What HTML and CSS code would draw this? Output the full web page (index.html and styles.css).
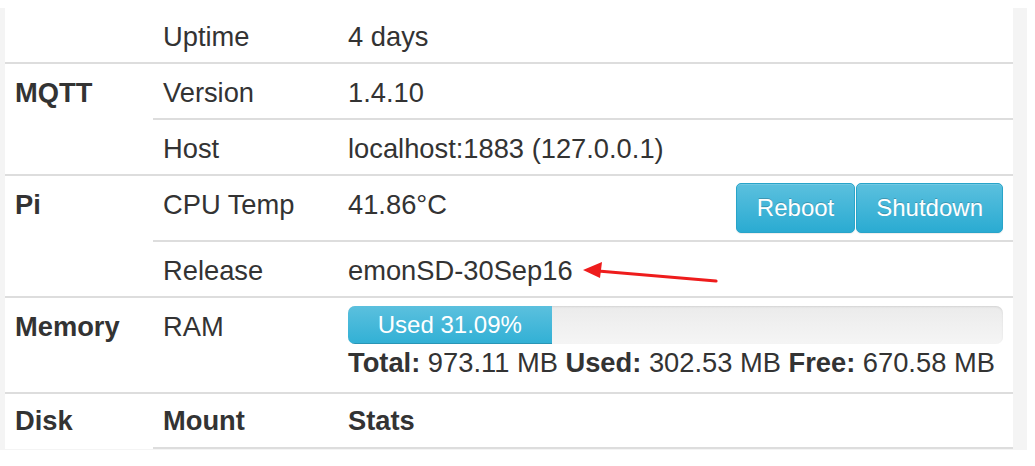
FILE: index.html
```html
<!DOCTYPE html>
<html>
<head>
<meta charset="utf-8">
<title>System status</title>
<link rel="stylesheet" href="styles.css">
</head>
<body>
<div class="page">
  <div class="frame">
    <table class="status">
      <colgroup>
        <col class="c1">
        <col class="c2">
        <col class="c3">
      </colgroup>
      <tr class="first">
        <th></th>
        <td>Uptime</td>
        <td>4 days</td>
      </tr>
      <tr>
        <th rowspan="2">MQTT</th>
        <td>Version</td>
        <td>1.4.10</td>
      </tr>
      <tr>
        <td>Host</td>
        <td>localhost:1883 (127.0.0.1)</td>
      </tr>
      <tr class="pi">
        <th rowspan="2">Pi</th>
        <td>CPU Temp</td>
        <td>
          <div class="temp-cell">
            <span>41.86°C</span>
            <div class="btn-group">
              <button class="btn btn-first">Reboot</button>
              <button class="btn btn-last">Shutdown</button>
            </div>
          </div>
        </td>
      </tr>
      <tr>
        <td>Release</td>
        <td>emonSD-30Sep16</td>
      </tr>
      <tr class="memory">
        <th>Memory</th>
        <td>RAM</td>
        <td>
          <div class="progress">
            <div class="progress-bar" style="width: 31.09%">Used 31.09%</div>
          </div>
          <div class="mem-stats"><b>Total:</b> 973.11 MB <b>Used:</b> 302.53 MB <b>Free:</b> 670.58 MB</div>
        </td>
      </tr>
      <tr class="head">
        <th>Disk</th>
        <th class="ul">Mount</th>
        <th class="ul">Stats</th>
      </tr>
    </table>
  </div>
  <svg class="arrow" width="1035" height="466" viewBox="0 0 1035 466">
    <line x1="716" y1="281" x2="598" y2="271" stroke="#ee1c1c" stroke-width="3.2" stroke-linecap="round"/>
    <polygon points="583,270 602,262 600,278" fill="#ee1c1c"/>
  </svg>
</div>
</body>
</html>
```

FILE: styles.css
```css
html, body {
  margin: 0;
  padding: 0;
  background: #ffffff;
}

body {
  font-family: "Liberation Sans", Arial, sans-serif;
  font-size: 27.3px;
  line-height: 37px;
  color: #333333;
}

.page {
  position: relative;
  width: 1035px;
  height: 466px;
  padding-top: 8px;
  box-sizing: border-box;
}

.frame {
  width: 1027px;
  box-sizing: border-box;
  background: #f4f4f4;
  padding: 0 14px 1px 5px;
}

.status {
  width: 1008px;
  background: #ffffff;
  border-collapse: collapse;
  table-layout: fixed;
}

.c1 { width: 148px; }
.c2 { width: 185px; }
.c3 { width: 675px; }

.status td,
.status th {
  text-align: left;
  vertical-align: top;
  padding: 10px 10px 7px 10px;
  border-top: 2px solid #dddddd;
  white-space: nowrap;
}

.status th {
  font-weight: bold;
}

.status tr.first td,
.status tr.first th {
  border-top: none;
  padding-top: 10px;
  padding-bottom: 7px;
}

.temp-cell {
  display: flex;
  justify-content: space-between;
  align-items: flex-start;
}

.btn-group {
  display: flex;
  margin: -3px 0 0 0;
}

.btn {
  font-family: "Liberation Sans", Arial, sans-serif;
  font-size: 24px;
  line-height: 48px;
  height: 50px;
  padding: 0 20px;
  color: #ffffff;
  text-shadow: 0 -1px 0 rgba(0, 0, 0, 0.2);
  background: linear-gradient(to bottom, #5bc0de 0%, #2aabd2 100%);
  border: 1px solid #28a4c9;
  box-shadow: inset 0 1px 0 rgba(255, 255, 255, 0.15), 0 1px 1px rgba(0, 0, 0, 0.075);
  cursor: pointer;
}

.btn-first {
  border-radius: 5px;
}

.btn-last {
  margin-left: 1px;
  border-radius: 5px;
  padding: 0 19px;
}

.status tr.memory td,
.status tr.memory th {
  padding-bottom: 10px;
}

.progress {
  height: 38px;
  margin-top: -2px;
  margin-bottom: 0;
  border-radius: 7px;
  overflow: hidden;
  background: linear-gradient(to bottom, #ebebeb 0%, #f5f5f5 100%);
  box-shadow: inset 0 1px 2px rgba(0, 0, 0, 0.1);
}

.progress-bar {
  height: 100%;
  font-size: 24px;
  line-height: 38px;
  text-align: center;
  color: #ffffff;
  background: linear-gradient(to bottom, #5bc0de 0%, #31b0d5 100%);
  box-shadow: inset 0 -1px 0 rgba(0, 0, 0, 0.15);
}

.mem-stats {
  margin-bottom: 1px;
}

.mem-stats b {
  font-weight: bold;
}

.status tr.head th {
  padding-top: 8px;
  padding-bottom: 8px;
}

.status tr.head th.ul {
  border-bottom: 2px solid #dddddd;
}

.arrow {
  position: absolute;
  left: 0;
  top: 0;
  pointer-events: none;
}
```
